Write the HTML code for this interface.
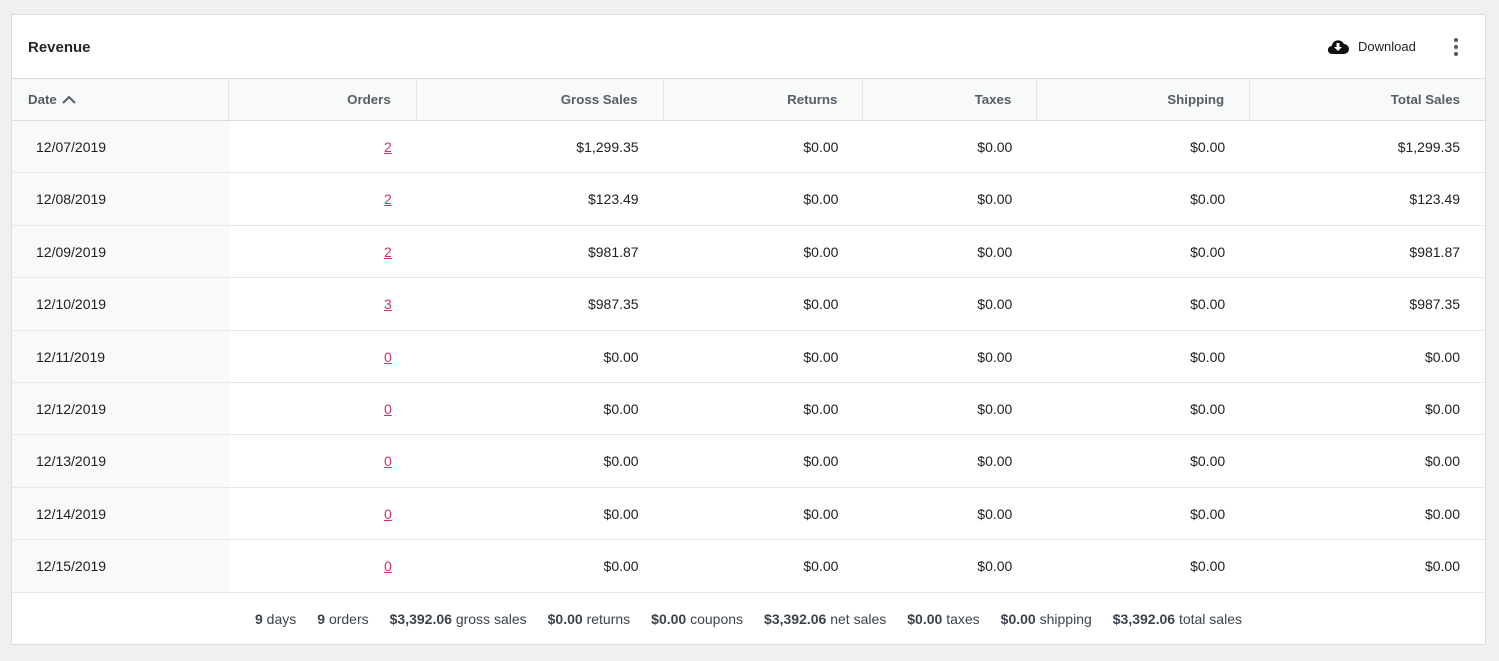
<!DOCTYPE html>
<html><head><style>
*{box-sizing:border-box;margin:0;padding:0}
body{width:1499px;height:661px;background:#f0f0f0;font-family:"Liberation Sans",Arial,sans-serif;font-size:14px;color:#1e1e1e;position:relative;overflow:hidden}
.card{position:absolute;left:11px;top:14px;width:1475px;height:631px;background:#fff;border:1px solid #dcdcde}
.hd{height:64px;position:relative;border-bottom:1px solid #dcdcde}
.hd .t{position:absolute;left:16px;top:24px;font-size:15px;font-weight:bold;color:#23282d}
.dl{position:absolute;left:1315px;top:23px;font-size:13px;display:flex;align-items:center;gap:9px}
.dots{position:absolute;left:1442px;top:23px;width:4px}
.dots i{display:block;width:4px;height:4px;border-radius:50%;background:#555;margin-bottom:3px}
.row{display:flex;height:52.4px;border-bottom:1px solid #e8e8e8}
.row div{text-align:right;padding-right:25px;line-height:52px}
.row div:first-child{text-align:left;padding-left:24px;background:#f8f9f9}
.th{height:42px;background:#f8f9f9;border-bottom:1px solid #dcdcde;font-size:13.3px}
.th div{line-height:42px;font-weight:bold;color:#555d66;border-right:1px solid #e2e4e7}
.th div:first-child{padding-left:16px}
.th div:last-child{border-right:none}
.c1{width:217px}.c2{width:188px}.c3{width:247px}.c4{width:200px}.c5{width:174px}.c6{width:213px}.c7{width:235px}
a{color:#d0306a;text-decoration:underline}
.ft{height:52px;text-align:center;line-height:52px;color:#3c434a;font-size:14px}
.ft span{margin:0 10.5px}
</style></head><body>
<div class="card">
<div class="hd"><div class="t">Revenue</div>
<div class="dl"><svg width="22" height="16" viewBox="0 0 22 16"><path d="M5 16h12a5 5 0 0 0 0-10 6.5 6.5 0 0 0-12.3 2A4 4 0 0 0 5 16z" fill="#111"/><path d="M9.5 5h3v4h2.5L11 13 7 9h2.5z" fill="#fff"/></svg>Download</div>
<div class="dots"><i></i><i></i><i></i></div></div>
<div class="row th"><div class="c1">Date <svg width="16" height="10" viewBox="0 0 16 10" style="vertical-align:-1px"><path d="M2 8l6-6 6 6" stroke="#555d66" stroke-width="2" fill="none"/></svg></div><div class="c2">Orders</div><div class="c3">Gross Sales</div><div class="c4">Returns</div><div class="c5">Taxes</div><div class="c6">Shipping</div><div class="c7">Total Sales</div></div>
<div class="row"><div class="c1">12/07/2019</div><div class="c2"><a>2</a></div><div class="c3">$1,299.35</div><div class="c4">$0.00</div><div class="c5">$0.00</div><div class="c6">$0.00</div><div class="c7">$1,299.35</div></div>
<div class="row"><div class="c1">12/08/2019</div><div class="c2"><a>2</a></div><div class="c3">$123.49</div><div class="c4">$0.00</div><div class="c5">$0.00</div><div class="c6">$0.00</div><div class="c7">$123.49</div></div>
<div class="row"><div class="c1">12/09/2019</div><div class="c2"><a>2</a></div><div class="c3">$981.87</div><div class="c4">$0.00</div><div class="c5">$0.00</div><div class="c6">$0.00</div><div class="c7">$981.87</div></div>
<div class="row"><div class="c1">12/10/2019</div><div class="c2"><a>3</a></div><div class="c3">$987.35</div><div class="c4">$0.00</div><div class="c5">$0.00</div><div class="c6">$0.00</div><div class="c7">$987.35</div></div>
<div class="row"><div class="c1">12/11/2019</div><div class="c2"><a>0</a></div><div class="c3">$0.00</div><div class="c4">$0.00</div><div class="c5">$0.00</div><div class="c6">$0.00</div><div class="c7">$0.00</div></div>
<div class="row"><div class="c1">12/12/2019</div><div class="c2"><a>0</a></div><div class="c3">$0.00</div><div class="c4">$0.00</div><div class="c5">$0.00</div><div class="c6">$0.00</div><div class="c7">$0.00</div></div>
<div class="row"><div class="c1">12/13/2019</div><div class="c2"><a>0</a></div><div class="c3">$0.00</div><div class="c4">$0.00</div><div class="c5">$0.00</div><div class="c6">$0.00</div><div class="c7">$0.00</div></div>
<div class="row"><div class="c1">12/14/2019</div><div class="c2"><a>0</a></div><div class="c3">$0.00</div><div class="c4">$0.00</div><div class="c5">$0.00</div><div class="c6">$0.00</div><div class="c7">$0.00</div></div>
<div class="row"><div class="c1">12/15/2019</div><div class="c2"><a>0</a></div><div class="c3">$0.00</div><div class="c4">$0.00</div><div class="c5">$0.00</div><div class="c6">$0.00</div><div class="c7">$0.00</div></div>
<div class="ft"><span><b>9</b> days</span><span><b>9</b> orders</span><span><b>$3,392.06</b> gross sales</span><span><b>$0.00</b> returns</span><span><b>$0.00</b> coupons</span><span><b>$3,392.06</b> net sales</span><span><b>$0.00</b> taxes</span><span><b>$0.00</b> shipping</span><span><b>$3,392.06</b> total sales</span></div>
</div>
</body></html>
